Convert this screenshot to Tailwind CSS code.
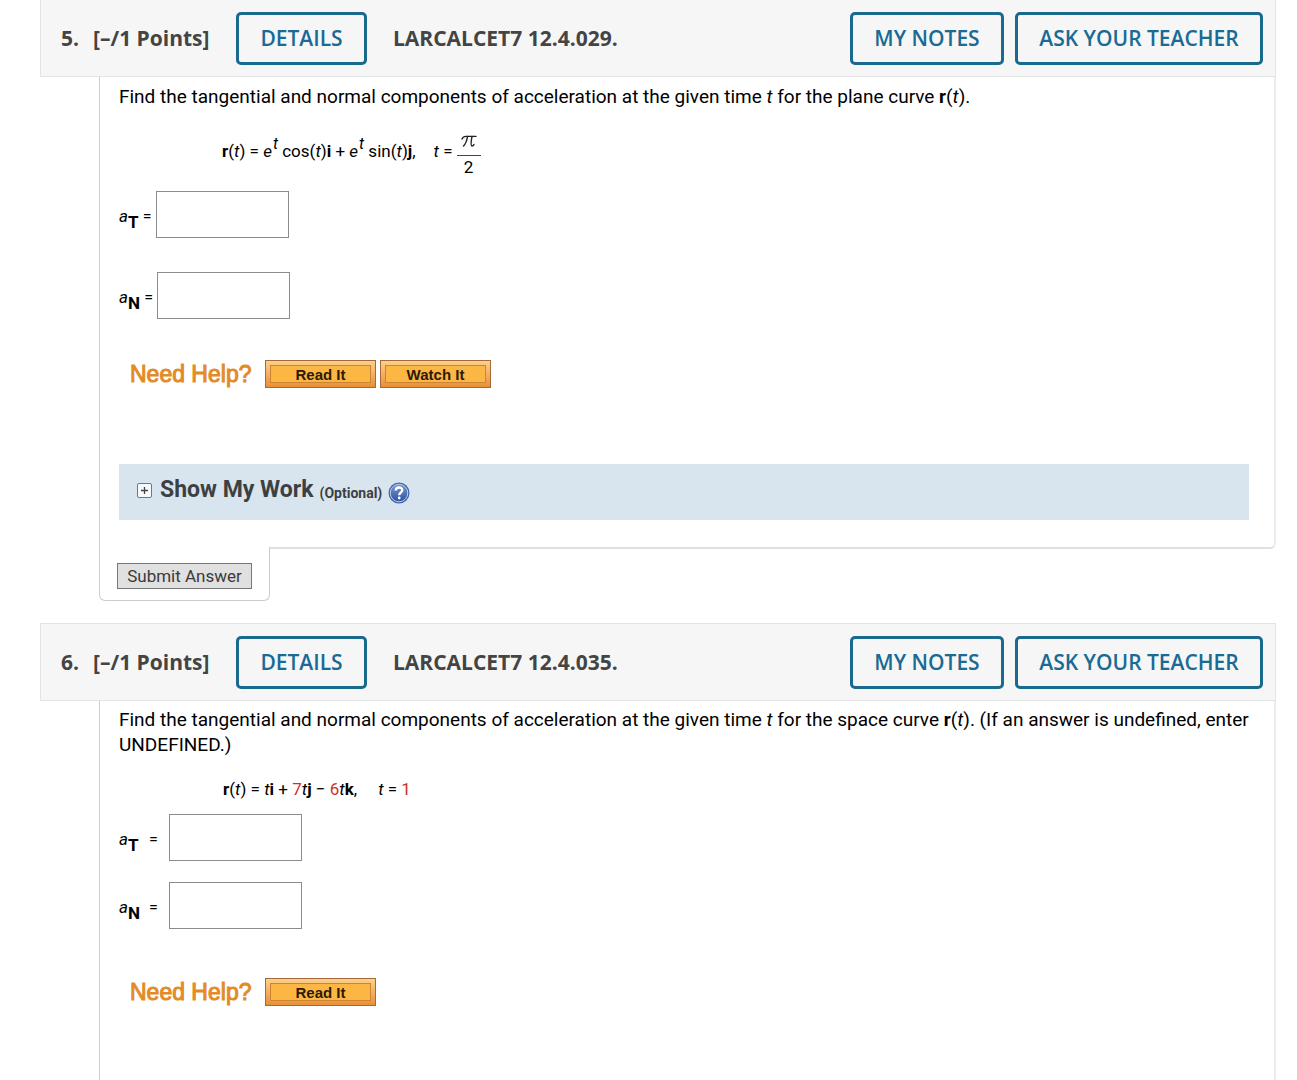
<!DOCTYPE html>
<html lang="en">
<head>
  <meta charset="UTF-8">
  <meta name="viewport" content="width=device-width, initial-scale=1.0">
  <title>Assignment - Questions 5 and 6</title>
  <script src="https://cdn.jsdelivr.net/npm/@tailwindcss/browser@4"></script>
</head>
<body class="bg-white text-black font-['Roboto','Liberation_Sans',sans-serif] overflow-x-hidden">
  <main class="ml-10 mr-[21px] h-screen overflow-hidden">

    <!-- Question 5 -->
    <section>
      <header class="flex items-center h-[77px] pl-5 pr-3 bg-[#f6f6f6] border border-t-0 border-[#e4e4e4] font-['Open_Sans',sans-serif] text-[21px] leading-7 whitespace-nowrap">
        <h2 class="w-[150px] flex gap-[14px] font-bold text-[#444]"><span>5.</span><span>[–/1 Points]</span></h2>
        <button type="button" class="ml-[25px] h-[53px] w-[131px] rounded-[5px] border-[3px] border-[#196a8e] pb-px font-semibold text-[#196a94]">DETAILS</button>
        <span class="ml-[26px] font-bold text-[#444]">LARCALCET7 12.4.029.</span>
        <div class="ml-auto flex gap-[11px]">
          <button type="button" class="h-[53px] w-[154px] rounded-[5px] border-[3px] border-[#196a8e] pb-px font-semibold text-[#196a94]">MY NOTES</button>
          <button type="button" class="h-[53px] w-[248px] rounded-[5px] border-[3px] border-[#196a8e] pb-px font-semibold text-[#196a94]">ASK YOUR TEACHER</button>
        </div>
      </header>

      <div class="ml-[59px] pt-[7px] pb-[27px] pl-[19px] pr-[25px] border-l border-l-[#ccc] border-r-2 border-r-[#ebebeb] border-b-2 border-b-[#e0e0e0] rounded-br-md">
        <p class="-mr-4 text-[19px] leading-[25px]">Find the tangential and normal components of acceleration at the given time <i>t</i> for the plane curve <b>r</b>(<i>t</i>).</p>

        <div class="mt-[18px] ml-[103px] h-[50px] flex items-center text-[17px] whitespace-pre">
          <span><b>r</b>(<i>t</i>) = <i>e</i><sup class="ml-px text-base italic -top-2">t</sup> cos(<i>t</i>)<b>i</b> + <i>e</i><sup class="ml-px text-base italic -top-2">t</sup> sin(<i>t</i>)<b>j</b>,</span>
          <span class="ml-[18px]"><i>t</i> =</span>
          <span class="ml-1 inline-flex flex-col items-center text-[17px] leading-5 pt-2">
            <svg class="w-4 h-3 mb-2" viewBox="0 0 16 12" fill="none" stroke="#222" stroke-width="1.4" stroke-linecap="round" aria-label="pi"><path d="M1 4 C2 1.500 3 1.400 5 1.400 H15"/><path d="M6.500 1.500 C6 5 5 8.500 2.500 11"/><path d="M11 1.500 C10.300 5 9.500 10.500 11 11 C12 11 12.500 10.500 13 9.500"/></svg>
            <span class="w-6 border-t border-[#444] text-center pt-px">2</span>
          </span>
        </div>

        <div class="mt-[14px] flex items-center">
          <label for="q5-at" class="w-[37px] pt-1 text-[17px] whitespace-nowrap"><i>a</i><sub class="font-bold text-[17px] -bottom-1.5">T</sub> <span class="text-base">=</span></label>
          <input id="q5-at" type="text" class="w-[133px] h-[47px] border border-[#8c8c8c] bg-white px-2">
        </div>
        <div class="mt-[34px] flex items-center">
          <label for="q5-an" class="w-[38px] pt-1 text-[17px] whitespace-nowrap"><i>a</i><sub class="font-bold text-[17px] -bottom-1.5">N</sub> <span class="text-base">=</span></label>
          <input id="q5-an" type="text" class="w-[133px] h-[47px] border border-[#8c8c8c] bg-white px-2">
        </div>

        <div class="mt-[41px] ml-[11px] flex items-center font-['Liberation_Sans',sans-serif]">
          <span class="w-[135px] text-[23px] leading-7 text-[#e38b27] [-webkit-text-stroke:1px_#e38b27]">Need Help?</span>
          <button type="button" class="w-[111px] h-7 border border-[#a8693a] bg-linear-to-b from-[#fcd08c] to-[#e88f35] p-1"><span class="flex items-center justify-center h-full border border-[#cf8432] bg-[#fcb643] pt-[2px] text-[15px] font-bold text-[#2c1a08]">Read It</span></button>
          <button type="button" class="ml-1 w-[111px] h-7 border border-[#a8693a] bg-linear-to-b from-[#fcd08c] to-[#e88f35] p-1"><span class="flex items-center justify-center h-full border border-[#cf8432] bg-[#fcb643] pt-[2px] text-[15px] font-bold text-[#2c1a08]">Watch It</span></button>
        </div>

        <div class="mt-[76px] h-14 flex items-center pl-[18px] pb-[3px] bg-[#d9e5ee] text-[#3c4043]">
          <button type="button" class="flex items-center" aria-expanded="false">
            <svg class="w-[15px] h-[15px]" viewBox="0 0 15 15" fill="#f7fafc" stroke="#5c7d99"><rect x=".5" y=".5" width="14" height="14" rx="1.500"/><path d="M4 7.500h7M7.500 4v7" stroke="#444" stroke-width="1.300"/></svg>
            <span class="ml-2 text-[23px] font-bold">Show My Work</span>
          </button>
          <span class="ml-[6px] mt-1 text-sm font-bold">(Optional)</span>
          <a href="#" class="ml-[6px] mt-1" aria-label="Help">
            <svg class="w-[22px] h-[22px]" viewBox="0 0 22 22"><defs><linearGradient id="help" x1="0" y1="0" x2="0" y2="1"><stop offset="0" stop-color="#7b9bd6"/><stop offset="1" stop-color="#2c509f"/></linearGradient></defs><circle cx="11" cy="11" r="10.500" fill="#3d64ac"/><circle cx="11" cy="11" r="8.800" fill="url(#help)" stroke="#bccde9" stroke-width="1"/><path d="M7.800 8.500C7.800 4.500 14.300 4.600 14.300 8.300C14.300 10.600 11.200 10.500 11.200 13.200" fill="none" stroke="#fff" stroke-width="2.300"/><circle cx="11.200" cy="16" r="1.400" fill="#fff"/></svg>
          </a>
        </div>
      </div>

      <div class="relative -mt-[2px] ml-[59px] w-[171px] h-[54px] pl-[17px] pt-4 bg-white border border-t-0 border-[#ccc] rounded-b-md">
        <button type="submit" class="w-[135px] h-[26px] border border-[#777] bg-[#e0e0e0] text-[17px] leading-6 text-[#3a3a3a]">Submit Answer</button>
      </div>
    </section>

    <!-- Question 6 -->
    <section class="mt-[22px]">
      <header class="flex items-center h-[78px] pl-5 pr-3 bg-[#f6f6f6] border border-[#e4e4e4] font-['Open_Sans',sans-serif] text-[21px] leading-7 whitespace-nowrap">
        <h2 class="w-[150px] flex gap-[14px] font-bold text-[#444]"><span>6.</span><span>[–/1 Points]</span></h2>
        <button type="button" class="ml-[25px] h-[53px] w-[131px] rounded-[5px] border-[3px] border-[#196a8e] pb-px font-semibold text-[#196a94]">DETAILS</button>
        <span class="ml-[26px] font-bold text-[#444]">LARCALCET7 12.4.035.</span>
        <div class="ml-auto flex gap-[11px]">
          <button type="button" class="h-[53px] w-[154px] rounded-[5px] border-[3px] border-[#196a8e] pb-px font-semibold text-[#196a94]">MY NOTES</button>
          <button type="button" class="h-[53px] w-[248px] rounded-[5px] border-[3px] border-[#196a8e] pb-px font-semibold text-[#196a94]">ASK YOUR TEACHER</button>
        </div>
      </header>

      <div class="ml-[59px] pt-[6px] pb-24 pl-[19px] pr-[25px] border-l border-l-[#ccc] border-r-2 border-r-[#ebebeb]">
        <p class="-mr-4 text-[19px] leading-[25px]">Find the tangential and normal components of acceleration at the given time <i>t</i> for the space curve <b>r</b>(<i>t</i>). (If an answer is undefined, enter UNDEFINED.)</p>

        <div class="mt-5 ml-[104px] h-[25px] flex items-center text-[17px] whitespace-pre">
          <span><b>r</b>(<i>t</i>) = <i>t</i><b>i</b> + <span class="text-[#c8322e]">7</span><i>t</i><b>j</b> − <span class="text-[#c8322e]">6</span><i>t</i><b>k</b>,</span>
          <span class="ml-[21px]"><i>t</i> = <span class="text-[#c8322e]">1</span></span>
        </div>

        <div class="mt-3 flex items-center">
          <label for="q6-at" class="w-[50px] pt-1 flex items-center text-[17px]"><span class="w-[30px]"><i>a</i><sub class="font-bold text-[17px] -bottom-1.5">T</sub></span><span class="text-base">=</span></label>
          <input id="q6-at" type="text" class="w-[133px] h-[47px] border border-[#8c8c8c] bg-white px-2">
        </div>
        <div class="mt-[21px] flex items-center">
          <label for="q6-an" class="w-[50px] pt-1 flex items-center text-[17px]"><span class="w-[30px]"><i>a</i><sub class="font-bold text-[17px] -bottom-1.5">N</sub></span><span class="text-base">=</span></label>
          <input id="q6-an" type="text" class="w-[133px] h-[47px] border border-[#8c8c8c] bg-white px-2">
        </div>

        <div class="mt-[49px] ml-[11px] flex items-center font-['Liberation_Sans',sans-serif]">
          <span class="w-[135px] text-[23px] leading-7 text-[#e38b27] [-webkit-text-stroke:1px_#e38b27]">Need Help?</span>
          <button type="button" class="w-[111px] h-7 border border-[#a8693a] bg-linear-to-b from-[#fcd08c] to-[#e88f35] p-1"><span class="flex items-center justify-center h-full border border-[#cf8432] bg-[#fcb643] pt-[2px] text-[15px] font-bold text-[#2c1a08]">Read It</span></button>
        </div>
      </div>
    </section>
  </main>
</body>
</html>
